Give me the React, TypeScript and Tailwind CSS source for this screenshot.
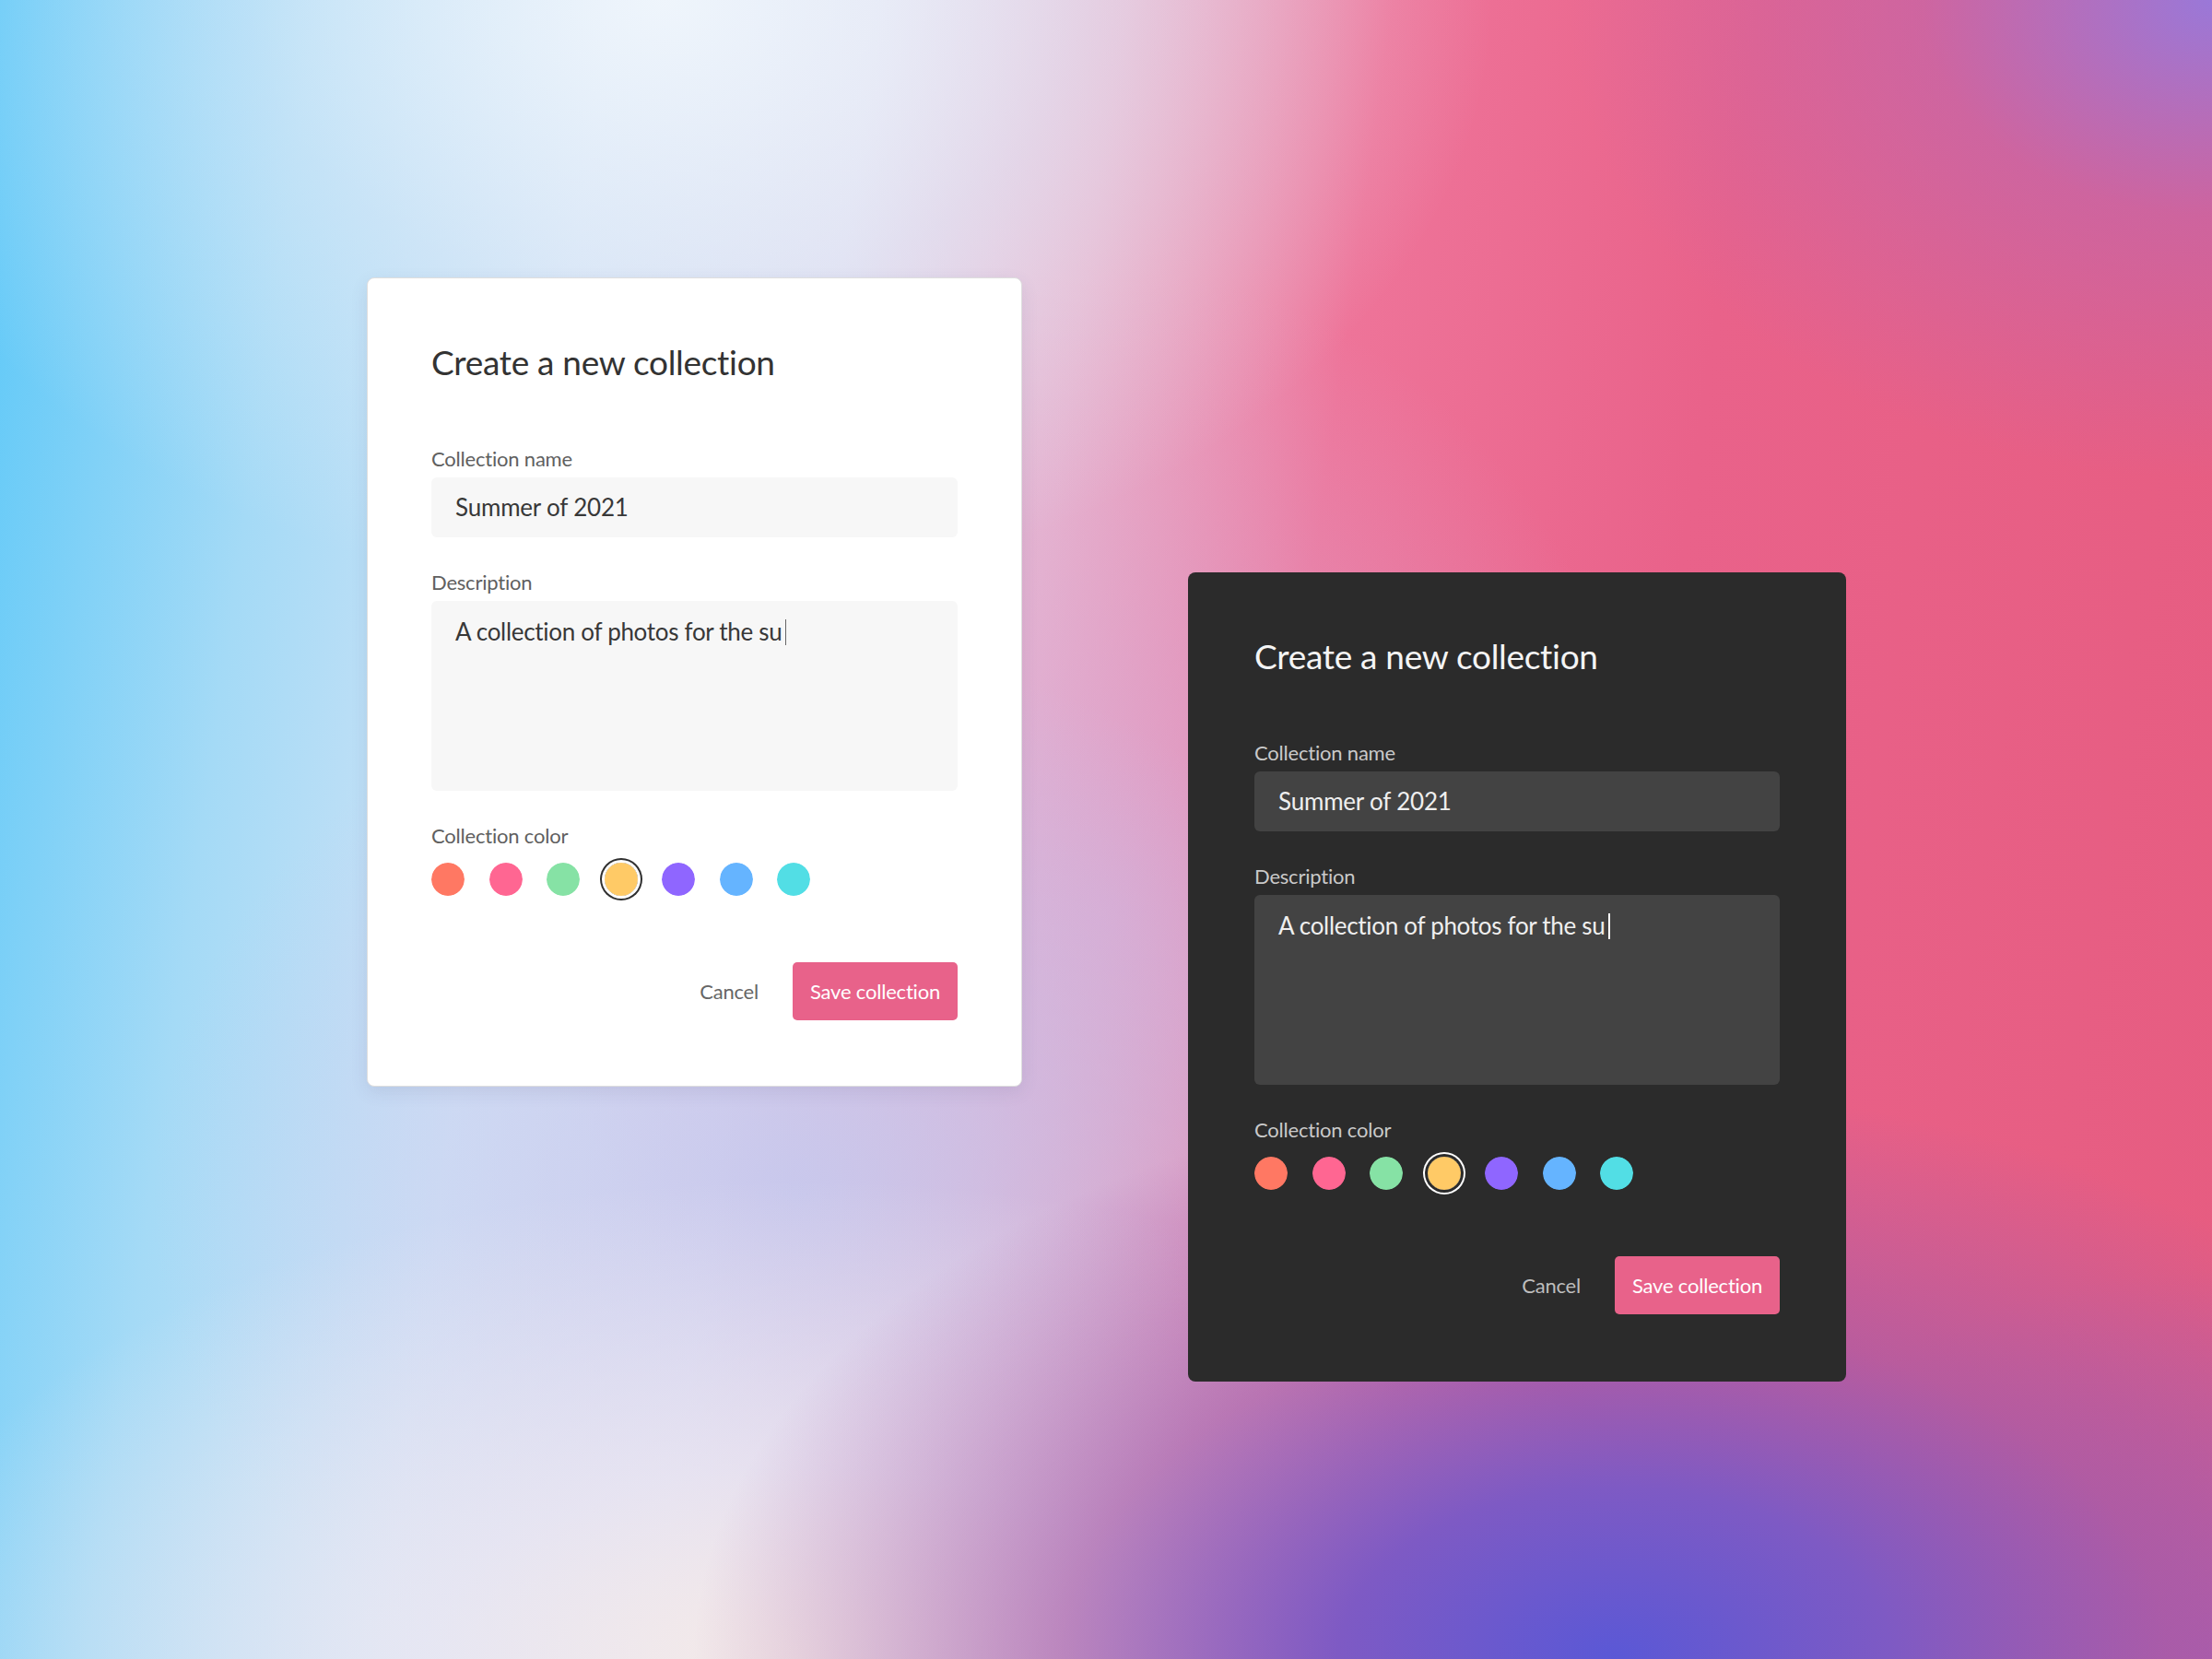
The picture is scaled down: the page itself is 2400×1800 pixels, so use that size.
import React from "react";

const COLORS = ["#FF7863", "#FF6692", "#86E2A5", "#FFCA66", "#8F66FF", "#65B4FF", "#52DEE5"];

function Card({ dark }: { dark: boolean }) {
  const title = dark ? "text-[#f4f4f4]" : "text-[#333333]";
  const label = dark ? "text-[#c9c9c9]" : "text-[#606060]";
  const field = dark ? "bg-[#434343] text-[#efefef]" : "bg-[#f7f7f7] text-[#383838]";
  const cancel = dark ? "text-[#bdbdbd]" : "text-[#666666]";
  return (
    <div
      className={
        "flex flex-col h-[878px] rounded-[8px] pt-[69px] " +
        (dark
          ? "w-[714px] px-[72px] bg-[#2b2b2b]"
          : "w-[711px] px-[69px] bg-white border border-[#dedede] shadow-[0_6px_18px_rgba(80,80,120,0.12)]")
      }
    >
      <h1 className={"text-[37px] leading-[44px] tracking-[-0.3px] font-normal " + title}>
        Create a new collection
      </h1>

      <div className={"mt-[69px] text-[22px] leading-[28px] tracking-[-0.2px] " + label}>Collection name</div>
      <div className={"mt-[6px] h-[65px] rounded-[6px] flex items-center px-[26px] text-[26px] tracking-[-0.2px] " + field}>
        Summer of 2021
      </div>

      <div className={"mt-[35px] text-[22px] leading-[28px] tracking-[-0.2px] " + label}>Description</div>
      <div className={"mt-[6px] h-[206px] rounded-[6px] px-[26px] pt-[15px] text-[26px] leading-[36px] tracking-[-0.3px] " + field}>
        <span>A collection of photos for the su</span>
        <span
          className={
            "inline-block align-[-5px] ml-[3px] h-[28px] " +
            (dark ? "w-[2px] bg-white" : "w-[1.5px] bg-[#666666]")
          }
        />
      </div>

      <div className={"mt-[35px] text-[22px] leading-[28px] tracking-[-0.2px] " + label}>Collection color</div>
      <div className="mt-[15px] flex items-center gap-[26.5px] h-[36px]">
        {COLORS.map((c, i) => (
          <ColorDot key={c} color={c} selected={i === 3} dark={dark} />
        ))}
      </div>

      <div className="mt-[72px] flex items-center justify-end gap-[37px]">
        <span className={"text-[22px] tracking-[-0.2px] " + cancel}>Cancel</span>
        <button className="h-[63px] px-[19px] rounded-[5px] bg-[#E8628A] text-white text-[22px] tracking-[-0.2px]">
          Save collection
        </button>
      </div>
    </div>
  );
}

function ColorDot({ color, selected, dark }: { color: string; selected: boolean; dark: boolean }) {
  const ring = selected
    ? dark
      ? " ring-2 ring-white ring-offset-[3px] ring-offset-[#2b2b2b]"
      : " ring-2 ring-[#2f2f2f] ring-offset-[3px] ring-offset-white"
    : "";
  return <ColorSwatch color={color} cls={"w-[36px] h-[36px] rounded-full shrink-0" + ring} />;
}

function ColorSwatch({ color, cls }: { color: string; cls: string }) {
  return (
    <svg className={cls} viewBox="0 0 36 36" width="36" height="36">
      <circle cx="18" cy="18" r="18" fill={color} />
    </svg>
  );
}

export default function App() {
  return (
    <div
      className="w-[2400px] h-[1800px] overflow-hidden font-['Lato','Noto_Sans',sans-serif] bg-[radial-gradient(700px_520px_at_100%_0%,#9a78d8_0%,rgba(185,105,180,0.55)_45%,transparent_100%),radial-gradient(1000px_620px_at_73%_100%,#5a58d6_0%,#7e5ac4_30%,rgba(160,90,170,0.65)_60%,transparent_100%),radial-gradient(560px_420px_at_100%_100%,rgba(170,95,180,0.8)_0%,transparent_100%),radial-gradient(1000px_520px_at_36%_100%,#f5ebe8_0%,rgba(236,232,242,0.75)_40%,transparent_100%),radial-gradient(900px_650px_at_30%_0%,rgba(240,246,252,0.95)_0%,rgba(225,235,248,0.5)_50%,transparent_100%),radial-gradient(700px_600px_at_36%_72%,rgba(196,200,238,0.85)_0%,transparent_100%),radial-gradient(600px_700px_at_50%_55%,rgba(214,172,216,0.7)_0%,transparent_100%),linear-gradient(98deg,#5cc8f8_0%,#a4daf6_13%,#d2e3f6_25%,#e2dcef_36%,#e9b2cc_46%,#ee7499_57%,#e9628a_72%,#e65c80_100%)]"
    >
      <div className="flex items-start pl-[398px] gap-[180px]">
        <div className="mt-[301px]">
          <Card dark={false} />
        </div>
        <div className="mt-[621px]">
          <Card dark={true} />
        </div>
      </div>
    </div>
  );
}
